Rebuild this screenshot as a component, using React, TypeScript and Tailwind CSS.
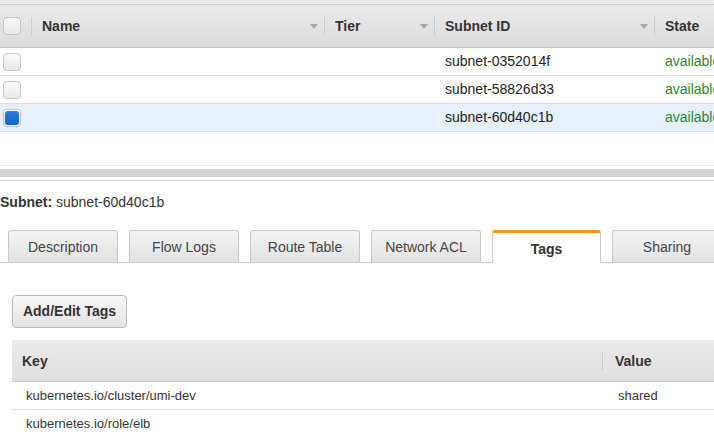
import React from "react"

const FONT = { fontFamily: '"Liberation Sans", Arial, Helvetica, sans-serif' }

type Subnet = { id: string; state: string; selected?: boolean }

const subnets: Subnet[] = [
  { id: "subnet-0352014f", state: "available" },
  { id: "subnet-58826d33", state: "available" },
  { id: "subnet-60d40c1b", state: "available", selected: true },
]

const tags = [
  { key: "kubernetes.io/cluster/umi-dev", value: "shared" },
  { key: "kubernetes.io/role/elb", value: "" },
]

const tabs = ["Description", "Flow Logs", "Route Table", "Network ACL", "Tags", "Sharing"]

function Checkbox({ checked }: { checked?: boolean }) {
  return (
    <div className="w-[18px] h-[18px] rounded-[4px] border border-[#c2c2c2] bg-gradient-to-b from-[#fafafa] to-[#e9e9e9] flex items-center justify-center">
      {checked && <div className="w-[14px] h-[14px] rounded-[3px] bg-gradient-to-b from-[#2a7fe0] to-[#1264c4]" />}
    </div>
  )
}

function SortArrow() {
  return (
    <svg width="8" height="5" viewBox="0 0 8 5" className="shrink-0">
      <path d="M0 0 L8 0 L4 5 Z" fill="#a8a8a8" />
    </svg>
  )
}

function Sep() {
  return <div className="w-px h-[18px] bg-[#c9c9c9] shrink-0" />
}

function HeaderCell({ label, arrow = true, sep = true }: { label: string; arrow?: boolean; sep?: boolean }) {
  return (
    <div className="flex items-center h-full pl-[10px]">
      <span className="font-bold text-[14px] text-[#333] flex-1 whitespace-nowrap">{label}</span>
      {arrow && <div className="mr-[6px]"><SortArrow /></div>}
      {sep && <Sep />}
    </div>
  )
}

export default function App() {
  return (
    <div className="w-[714px] h-[435px] overflow-hidden bg-white text-[#333]" style={FONT}>
      {/* 子网列表 */}
      <div className="h-[5px] bg-[#ebebeb] border-b border-[#cdcdcd]" />
      <div className="grid grid-cols-[32px_293px_110px_220px_1fr] h-[43px] bg-gradient-to-b from-[#ececec] to-[#dadada] border-b border-[#c4c4c4]">
        <div className="flex items-center h-full pl-[3px]">
          <div className="flex-1"><Checkbox /></div>
          <Sep />
        </div>
        <HeaderCell label="Name" />
        <HeaderCell label="Tier" />
        <HeaderCell label="Subnet ID" />
        <HeaderCell label="State" arrow={false} sep={false} />
      </div>
      {subnets.map((s) => (
        <div
          key={s.id}
          className={`grid grid-cols-[32px_293px_110px_220px_1fr] h-[28px] border-b border-[#dcdcdc] text-[14px] ${
            s.selected ? "bg-[#e6f0fb]" : "bg-white"
          }`}
        >
          <div className="flex items-center pl-[3px]">
            <Checkbox checked={s.selected} />
          </div>
          <div />
          <div />
          <div className="flex items-center pl-[10px] text-[#222]">{s.id}</div>
          <div className="flex items-center pl-[10px] text-[#1d8a2e] whitespace-nowrap">{s.state}</div>
        </div>
      ))}

      {/* 分隔条 */}
      <div className="mt-[33px] border-t border-[#e6e6e6]" />
      <div className="mt-[3px] h-[8px] bg-[#d4d4d4]" />
      <div className="mt-[3px] border-t border-[#cfcfcf]" />

      {/* 详情面板 */}
      <div className="pt-[13px] h-[31px] text-[14px] leading-[17px] text-[#333] whitespace-nowrap">
        <span className="font-bold">Subnet:</span> subnet-60d40c1b
      </div>

      <div className="mt-[18px] flex items-end gap-[11px] pl-[8px] h-[33px] border-b border-[#c8c8c8]">
        {tabs.map((t) => {
          const active = t === "Tags"
          return active ? (
            <div
              key={t}
              className="w-[109px] shrink-0 h-[33px] -mb-px bg-white border border-b-0 border-[#c8c8c8] border-t-[3px] border-t-[#f7931e] rounded-t-[3px] flex items-center justify-center pt-[2px] font-bold text-[14px] text-[#333]"
            >
              {t}
            </div>
          ) : (
            <div
              key={t}
              className="w-[110px] shrink-0 h-[32px] bg-gradient-to-b from-[#f4f4f4] to-[#e2e2e2] border border-b-0 border-[#c6c6c6] rounded-t-[3px] flex items-center justify-center pt-px text-[14px] text-[#444]"
            >
              {t}
            </div>
          )
        })}
      </div>

      <div className="pl-[12px] pt-[32px]">
        <button className="w-[115px] h-[33px] rounded-[4px] border border-[#b8b8b8] bg-gradient-to-b from-[#f8f8f8] to-[#e4e4e4] font-bold text-[14px] text-[#333]">
          Add/Edit Tags
        </button>
      </div>

      {/* 标签表 */}
      <div className="ml-[12px] mt-[12px]">
        <div className="grid grid-cols-[591px_1fr] h-[42px] bg-gradient-to-b from-[#ebebeb] to-[#dfdfdf] border-b border-[#c9c9c9]">
          <div className="flex items-center pl-[10px] pt-px">
            <span className="flex-1 font-bold text-[14px] text-[#333]">Key</span>
            <Sep />
          </div>
          <div className="flex items-center pl-[12px] pt-px font-bold text-[14px] text-[#333]">Value</div>
        </div>
        {tags.map((tg) => (
          <div key={tg.key} className="grid grid-cols-[591px_1fr] h-[28px] border-b border-[#dedede] text-[13px] text-[#333]">
            <div className="flex items-center pl-[14px]">{tg.key}</div>
            <div className="flex items-center pl-[15px]">{tg.value}</div>
          </div>
        ))}
      </div>
    </div>
  )
}
